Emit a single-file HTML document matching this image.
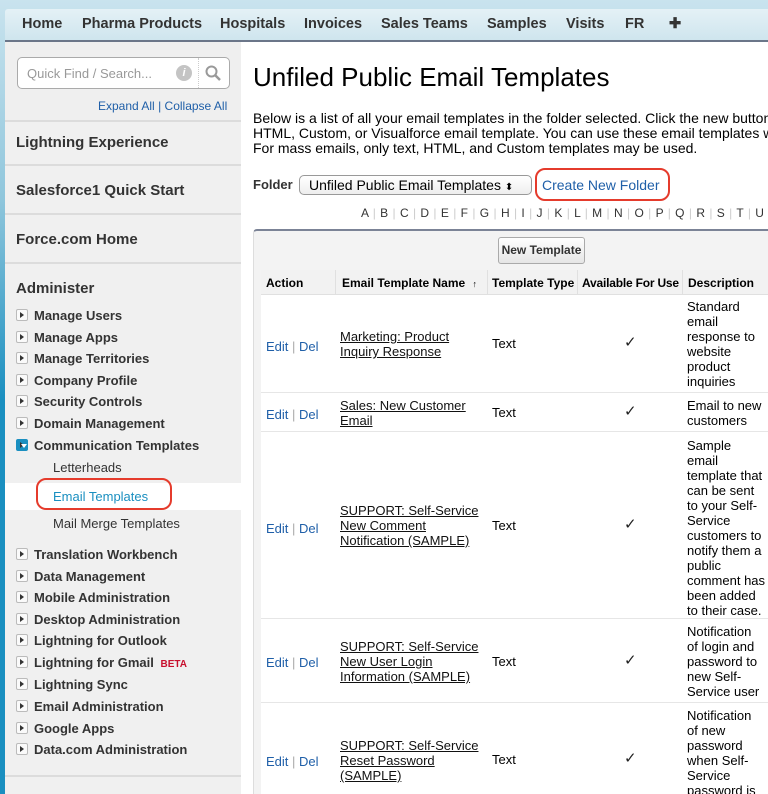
<!DOCTYPE html>
<html><head><meta charset="utf-8"><style>
*{margin:0;padding:0;box-sizing:border-box}
html,body{width:768px;height:794px;overflow:hidden}
body{position:relative;background:linear-gradient(180deg,#c9e3ee 0,#8fc6dc 200px,#1a8fc0 400px);font-family:"Liberation Sans",Arial,sans-serif;color:#000}
.a{position:absolute;white-space:nowrap}
#nav{left:5px;top:9px;width:763px;height:33px;background:linear-gradient(#e4f1f6,#cfe5ee);border-bottom:2px solid #6b7689;border-top-left-radius:3px}
#nav span{position:absolute;top:7px;font-weight:bold;font-size:14.5px;color:#333}
#side{left:5px;top:42px;width:236px;height:752px;background:#efefef}
#main{left:241px;top:42px;width:527px;height:752px;background:#fff}
.sec{position:absolute;left:5px;width:236px;border-top:2px solid #dcdcdc;background:#f0f0f0}
.sec b{position:absolute;left:11px;font-size:15px;color:#333}
.it{position:absolute;left:16px;font-weight:bold;font-size:13px;color:#333}
.it i{display:inline-block;width:12px;height:12px;border:1px solid #bbb;border-radius:2px;background:#fafafa;vertical-align:-1px;margin-right:6px;position:relative}
.it i:after{content:"";position:absolute;left:3px;top:2px;border-left:4px solid #333;border-top:3px solid transparent;border-bottom:3px solid transparent}
.sub{position:absolute;left:53px;font-size:13px;color:#333}
a{color:#1f5fa8;text-decoration:none}
.cell{position:absolute;font-size:13px;line-height:15px}
.u{text-decoration:underline;color:#111}
.hl{border-bottom:1px solid #e6e6e6}
.chk{position:absolute;left:624px;font-size:15px;color:#222}
</style></head><body>
<div class="a" id="nav">
<span style="left:17px">Home</span><span style="left:77px">Pharma Products</span><span style="left:215px">Hospitals</span><span style="left:299px">Invoices</span><span style="left:376px">Sales Teams</span><span style="left:482px">Samples</span><span style="left:561px">Visits</span><span style="left:620px">FR</span><span style="left:664px">✚</span>
</div>
<div class="a" id="side"></div>
<div class="a" id="main"></div>
<div class="a" style="left:17px;top:57px;width:213px;height:32px;border:1px solid #aaa;border-radius:5px;background:#fff"></div>
<div class="a" style="left:27px;top:66px;font-size:13px;color:#999">Quick Find / Search...</div>
<div class="a" style="left:176px;top:65px;width:16px;height:16px;border-radius:50%;background:#c4c4c4;color:#fff;font-size:11px;font-weight:bold;font-style:italic;text-align:center;line-height:16px">i</div>
<div class="a" style="left:198px;top:58px;width:1px;height:30px;border-left:1px dotted #ccc"></div>
<svg class="a" style="left:205px;top:65px" width="16" height="16"><circle cx="6.5" cy="6.5" r="5" fill="none" stroke="#999" stroke-width="2"/><line x1="10" y1="10" x2="15" y2="15" stroke="#999" stroke-width="2.5"/></svg>
<div class="a" style="left:98px;top:99px;font-size:12px"><a>Expand All</a> <span style="color:#1f5fa8">|</span> <a>Collapse All</a></div>
<div class="sec" style="top:120px;height:44px;background:#f0f0f0"><b style="top:12px">Lightning Experience</b></div>
<div class="sec" style="top:164px;height:50px"><b style="top:16px">Salesforce1 Quick Start</b></div>
<div class="sec" style="top:213px;height:50px"><b style="top:16px">Force.com Home</b></div>
<div class="sec" style="top:262px;height:221px"><b style="top:16px">Administer</b></div>
<div class="sec" style="top:510px;height:266px;border-top:none"></div>
<div class="sec" style="top:775px;height:19px"></div>
<div class="a" style="left:5px;top:483px;width:263px;height:27px;background:#fff"></div>
<div class="it" style="top:308px"><i></i>Manage Users</div>
<div class="it" style="top:330px"><i></i>Manage Apps</div>
<div class="it" style="top:351px"><i></i>Manage Territories</div>
<div class="it" style="top:373px"><i></i>Company Profile</div>
<div class="it" style="top:394px"><i></i>Security Controls</div>
<div class="it" style="top:416px"><i></i>Domain Management</div>
<div class="it" style="top:438px"><i style="background:#1a8fc0;border-color:#1a8fc0"></i>Communication Templates</div>
<div class="a" style="left:21px;top:444px;border-top:4px solid #fff;border-left:3px solid transparent;border-right:3px solid transparent"></div>
<div class="sub" style="top:460px">Letterheads</div>
<div class="sub" style="top:489px;color:#1a8fc0">Email Templates</div>
<div class="a" style="left:36px;top:478px;width:136px;height:32px;border:2px solid #e53b2c;border-radius:10px"></div>
<div class="sub" style="top:516px">Mail Merge Templates</div>
<div class="it" style="top:547px"><i></i>Translation Workbench</div>
<div class="it" style="top:569px"><i></i>Data Management</div>
<div class="it" style="top:590px"><i></i>Mobile Administration</div>
<div class="it" style="top:612px"><i></i>Desktop Administration</div>
<div class="it" style="top:633px"><i></i>Lightning for Outlook</div>
<div class="it" style="top:655px"><i></i>Lightning for Gmail <span style="color:#c8102e;font-size:10px;margin-left:3px">BETA</span></div>
<div class="it" style="top:677px"><i></i>Lightning Sync</div>
<div class="it" style="top:699px"><i></i>Email Administration</div>
<div class="it" style="top:721px"><i></i>Google Apps</div>
<div class="it" style="top:742px"><i></i>Data.com Administration</div>

<div class="a" style="left:253px;top:62px;font-size:26px">Unfiled Public Email Templates</div>
<div class="a" style="left:253px;top:111px;font-size:14px;line-height:15px">Below is a list of all your email templates in the folder selected. Click the new button<br>HTML, Custom, or Visualforce email template. You can use these email templates w<br>For mass emails, only text, HTML, and Custom templates may be used.</div>
<div class="a" style="left:253px;top:177px;font-size:13px;font-weight:bold;color:#333">Folder</div>
<div class="a" style="left:299px;top:175px;width:233px;height:20px;border:1px solid #999;border-radius:5px;background:linear-gradient(#fff,#eee);font-size:14px;padding:1px 0 0 9px">Unfiled Public Email Templates <span style="font-size:10px">⬍</span></div>
<div class="a" style="left:542px;top:177px;font-size:14px;color:#1f5fa8">Create New Folder</div>
<div class="a" style="left:535px;top:168px;width:135px;height:33px;border:2px solid #e53b2c;border-radius:10px"></div>
<div class="a" style="left:361px;top:206px;font-size:12px;color:#333;word-spacing:1px">A <span style="color:#ccc">|</span> B <span style="color:#ccc">|</span> C <span style="color:#ccc">|</span> D <span style="color:#ccc">|</span> E <span style="color:#ccc">|</span> F <span style="color:#ccc">|</span> G <span style="color:#ccc">|</span> H <span style="color:#ccc">|</span> I <span style="color:#ccc">|</span> J <span style="color:#ccc">|</span> K <span style="color:#ccc">|</span> L <span style="color:#ccc">|</span> M <span style="color:#ccc">|</span> N <span style="color:#ccc">|</span> O <span style="color:#ccc">|</span> P <span style="color:#ccc">|</span> Q <span style="color:#ccc">|</span> R <span style="color:#ccc">|</span> S <span style="color:#ccc">|</span> T <span style="color:#ccc">|</span> U</div>

<div class="a" style="left:253px;top:229px;width:520px;height:570px;background:#f3f3f3;border-top:2px solid #7b8396;border-left:1px solid #ddd;border-radius:4px 0 0 0"></div>
<div class="a" style="left:498px;top:237px;width:87px;height:27px;border:1px solid #aaa;border-radius:3px;background:linear-gradient(#fff,#e6e6e6);font-size:12px;font-weight:bold;text-align:center;line-height:25px;color:#333">New Template</div>
<div class="a" style="left:261px;top:270px;width:507px;height:524px;background:#fff"></div>
<div class="a" style="left:261px;top:270px;width:507px;height:25px;background:#f2f2f2;border-bottom:1px solid #e0e0e0"></div>
<div class="a" style="left:335px;top:270px;width:1px;height:25px;background:#e0e0e0"></div>
<div class="a" style="left:487px;top:270px;width:1px;height:25px;background:#e0e0e0"></div>
<div class="a" style="left:577px;top:270px;width:1px;height:25px;background:#e0e0e0"></div>
<div class="a" style="left:682px;top:270px;width:1px;height:25px;background:#e0e0e0"></div>
<div class="cell" style="left:266px;top:276px;font-weight:bold;font-size:12px">Action</div>
<div class="cell" style="left:342px;top:276px;font-weight:bold;font-size:12px">Email Template Name <span style="font-size:9px;margin-left:4px">↑</span></div>
<div class="cell" style="left:492px;top:276px;font-weight:bold;font-size:12px">Template Type</div>
<div class="cell" style="left:582px;top:276px;font-weight:bold;font-size:12px;letter-spacing:-0.2px">Available For Use</div>
<div class="cell" style="left:688px;top:276px;font-weight:bold;font-size:12px">Description</div>

<div class="a hl" style="left:261px;top:392px;width:507px"></div>
<div class="a hl" style="left:261px;top:431px;width:507px"></div>
<div class="a hl" style="left:261px;top:618px;width:507px"></div>
<div class="a hl" style="left:261px;top:702px;width:507px"></div>

<div class="cell" style="left:266px;top:339px"><a>Edit</a> <span style="color:#aaa">|</span> <a>Del</a></div>
<div class="cell u" style="left:340px;top:329px">Marketing: Product<br>Inquiry Response</div>
<div class="cell" style="left:492px;top:336px">Text</div>
<div class="chk" style="top:333px">✓</div>
<div class="cell" style="left:687px;top:299px">Standard<br>email<br>response to<br>website<br>product<br>inquiries</div>

<div class="cell" style="left:266px;top:407px"><a>Edit</a> <span style="color:#aaa">|</span> <a>Del</a></div>
<div class="cell u" style="left:340px;top:398px">Sales: New Customer<br>Email</div>
<div class="cell" style="left:492px;top:405px">Text</div>
<div class="chk" style="top:402px">✓</div>
<div class="cell" style="left:687px;top:398px">Email to new<br>customers</div>

<div class="cell" style="left:266px;top:521px"><a>Edit</a> <span style="color:#aaa">|</span> <a>Del</a></div>
<div class="cell u" style="left:340px;top:503px">SUPPORT: Self-Service<br>New Comment<br>Notification (SAMPLE)</div>
<div class="cell" style="left:492px;top:518px">Text</div>
<div class="chk" style="top:515px">✓</div>
<div class="cell" style="left:687px;top:438px">Sample<br>email<br>template that<br>can be sent<br>to your Self-<br>Service<br>customers to<br>notify them a<br>public<br>comment has<br>been added<br>to their case.</div>

<div class="cell" style="left:266px;top:655px"><a>Edit</a> <span style="color:#aaa">|</span> <a>Del</a></div>
<div class="cell u" style="left:340px;top:639px">SUPPORT: Self-Service<br>New User Login<br>Information (SAMPLE)</div>
<div class="cell" style="left:492px;top:654px">Text</div>
<div class="chk" style="top:651px">✓</div>
<div class="cell" style="left:687px;top:624px">Notification<br>of login and<br>password to<br>new Self-<br>Service user</div>

<div class="cell" style="left:266px;top:754px"><a>Edit</a> <span style="color:#aaa">|</span> <a>Del</a></div>
<div class="cell u" style="left:340px;top:738px">SUPPORT: Self-Service<br>Reset Password<br>(SAMPLE)</div>
<div class="cell" style="left:492px;top:752px">Text</div>
<div class="chk" style="top:749px">✓</div>
<div class="cell" style="left:687px;top:708px">Notification<br>of new<br>password<br>when Self-<br>Service<br>password is</div>
</body></html>
